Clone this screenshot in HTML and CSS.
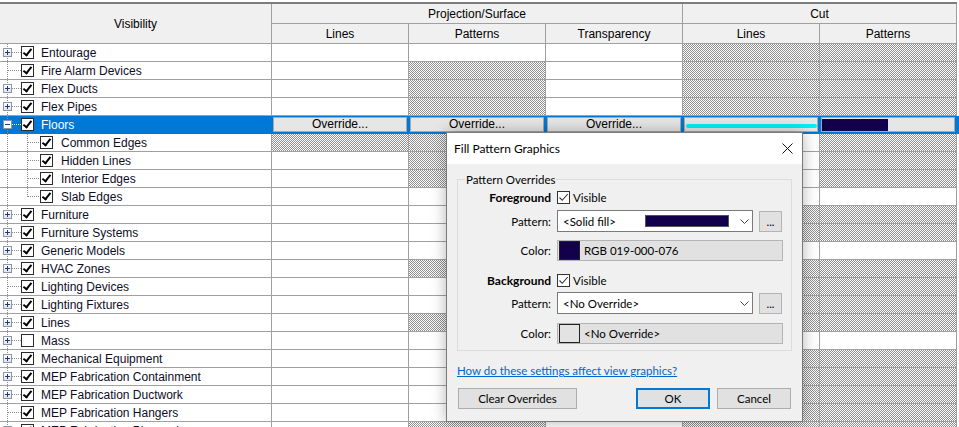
FILE: index.html
```html
<!DOCTYPE html>
<html lang="en">
<head>
    <meta charset="UTF-8">
    <title>Visibility/Graphic Overrides</title>
    <link rel="stylesheet" href="styles.css">
</head>
<body>
    <div class="grid">
        <div class="head">
            <div class="hc vis-h">Visibility</div>
            <div class="hc proj">Projection/Surface</div>
            <div class="hc cut">Cut</div>
            <div class="hc">Lines</div>
            <div class="hc">Patterns</div>
            <div class="hc">Transparency</div>
            <div class="hc">Lines</div>
            <div class="hc">Patterns</div>
        </div>

        <div class="row">
            <div class="vis"><span class="exp"></span><span class="cb on"></span><span class="name">Entourage</span></div>
            <div class="c"></div><div class="c"></div><div class="c"></div><div class="c h"></div><div class="c h"></div>
        </div>
        <div class="row">
            <div class="vis leaf"><span class="noexp"></span><span class="cb on"></span><span class="name">Fire Alarm Devices</span></div>
            <div class="c"></div><div class="c h"></div><div class="c"></div><div class="c h"></div><div class="c h"></div>
        </div>
        <div class="row">
            <div class="vis"><span class="exp"></span><span class="cb on"></span><span class="name">Flex Ducts</span></div>
            <div class="c"></div><div class="c h"></div><div class="c"></div><div class="c h"></div><div class="c h"></div>
        </div>
        <div class="row">
            <div class="vis"><span class="exp"></span><span class="cb on"></span><span class="name">Flex Pipes</span></div>
            <div class="c"></div><div class="c h"></div><div class="c"></div><div class="c h"></div><div class="c h"></div>
        </div>
        <!-- selected row -->
        <div class="row sel">
            <div class="vis"><span class="exp minus"></span><span class="cb on"></span><span class="name">Floors</span></div>
            <div class="c"><span class="ovr">Override...</span></div>
            <div class="c"><span class="ovr">Override...</span></div>
            <div class="c"><span class="ovr">Override...</span></div>
            <div class="c"><span class="ovr"><span class="cyan"></span></span></div>
            <div class="c"><span class="ovr left"><span class="navy"></span></span></div>
        </div>
        <div class="row">
            <div class="vis sub"><span class="cb on"></span><span class="name">Common Edges</span></div>
            <div class="c h"></div><div class="c h"></div><div class="c h"></div><div class="c"></div><div class="c h"></div>
        </div>
        <div class="row">
            <div class="vis sub"><span class="cb on"></span><span class="name">Hidden Lines</span></div>
            <div class="c"></div><div class="c h"></div><div class="c h"></div><div class="c"></div><div class="c h"></div>
        </div>
        <div class="row">
            <div class="vis sub"><span class="cb on"></span><span class="name">Interior Edges</span></div>
            <div class="c"></div><div class="c h"></div><div class="c h"></div><div class="c"></div><div class="c h"></div>
        </div>
        <div class="row">
            <div class="vis sub last"><span class="cb on"></span><span class="name">Slab Edges</span></div>
            <div class="c"></div><div class="c"></div><div class="c"></div><div class="c"></div><div class="c"></div>
        </div>
        <div class="row">
            <div class="vis"><span class="exp"></span><span class="cb on"></span><span class="name">Furniture</span></div>
            <div class="c"></div><div class="c"></div><div class="c"></div><div class="c h"></div><div class="c h"></div>
        </div>
        <div class="row">
            <div class="vis"><span class="exp"></span><span class="cb on"></span><span class="name">Furniture Systems</span></div>
            <div class="c"></div><div class="c"></div><div class="c"></div><div class="c h"></div><div class="c h"></div>
        </div>
        <div class="row">
            <div class="vis"><span class="exp"></span><span class="cb on"></span><span class="name">Generic Models</span></div>
            <div class="c"></div><div class="c"></div><div class="c"></div><div class="c"></div><div class="c"></div>
        </div>
        <div class="row">
            <div class="vis"><span class="exp"></span><span class="cb on"></span><span class="name">HVAC Zones</span></div>
            <div class="c"></div><div class="c h"></div><div class="c"></div><div class="c h"></div><div class="c h"></div>
        </div>
        <div class="row">
            <div class="vis leaf"><span class="noexp"></span><span class="cb on"></span><span class="name">Lighting Devices</span></div>
            <div class="c"></div><div class="c"></div><div class="c"></div><div class="c h"></div><div class="c h"></div>
        </div>
        <div class="row">
            <div class="vis"><span class="exp"></span><span class="cb on"></span><span class="name">Lighting Fixtures</span></div>
            <div class="c"></div><div class="c"></div><div class="c"></div><div class="c h"></div><div class="c h"></div>
        </div>
        <div class="row">
            <div class="vis"><span class="exp"></span><span class="cb on"></span><span class="name">Lines</span></div>
            <div class="c"></div><div class="c h"></div><div class="c h"></div><div class="c h"></div><div class="c h"></div>
        </div>
        <div class="row">
            <div class="vis"><span class="exp"></span><span class="cb"></span><span class="name">Mass</span></div>
            <div class="c"></div><div class="c"></div><div class="c"></div><div class="c"></div><div class="c"></div>
        </div>
        <div class="row">
            <div class="vis"><span class="exp"></span><span class="cb on"></span><span class="name">Mechanical Equipment</span></div>
            <div class="c"></div><div class="c"></div><div class="c"></div><div class="c h"></div><div class="c h"></div>
        </div>
        <div class="row">
            <div class="vis"><span class="exp"></span><span class="cb on"></span><span class="name">MEP Fabrication Containment</span></div>
            <div class="c"></div><div class="c"></div><div class="c"></div><div class="c h"></div><div class="c h"></div>
        </div>
        <div class="row">
            <div class="vis"><span class="exp"></span><span class="cb on"></span><span class="name">MEP Fabrication Ductwork</span></div>
            <div class="c"></div><div class="c"></div><div class="c"></div><div class="c h"></div><div class="c h"></div>
        </div>
        <div class="row">
            <div class="vis leaf"><span class="noexp"></span><span class="cb on"></span><span class="name">MEP Fabrication Hangers</span></div>
            <div class="c"></div><div class="c"></div><div class="c"></div><div class="c h"></div><div class="c h"></div>
        </div>
        <div class="row">
            <div class="vis"><span class="exp"></span><span class="cb on"></span><span class="name">MEP Fabrication Pipework</span></div>
            <div class="c"></div><div class="c h"></div><div class="c"></div><div class="c h"></div><div class="c h"></div>
        </div>
    </div>

    <!-- Fill Pattern Graphics dialog, floats over the grid -->
    <div class="dlg">
        <div class="dlg-title">
            <span>Fill Pattern Graphics</span>
            <svg class="close" width="11" height="11" viewBox="0 0 11 11"><path d="M0.5 0.5 L10.5 10.5 M10.5 0.5 L0.5 10.5" stroke="#111" stroke-width="1" fill="none"/></svg>
        </div>
        <div class="dlg-body">
            <fieldset>
                <legend>Pattern Overrides</legend>

                <div class="frow fr-vis">
                    <span class="lbl bold">Foreground</span>
                    <span class="dcb"><svg width="11" height="11" viewBox="0 0 11 11"><path d="M1.5 5.5 L4.2 8.3 L9.8 2" stroke="#333" stroke-width="1.1" fill="none"/></svg></span>
                    <span class="vis-txt">Visible</span>
                </div>
                <div class="frow fr-pat">
                    <span class="lbl">Pattern:</span>
                    <span class="sel-box">
                        <span>&lt;Solid fill&gt;</span>
                        <span class="pat-sw"></span>
                        <svg class="chev" width="9" height="5" viewBox="0 0 9 5"><path d="M0.5 0.5 L4.5 4.5 L8.5 0.5" stroke="#444" fill="none"/></svg>
                    </span>
                    <span class="dots">...</span>
                </div>
                <div class="frow fr-col">
                    <span class="lbl">Color:</span>
                    <span class="col-box"><span class="col-sw navy-sw"></span>RGB 019-000-076</span>
                </div>

                <div class="frow fr-vis2">
                    <span class="lbl bold">Background</span>
                    <span class="dcb"><svg width="11" height="11" viewBox="0 0 11 11"><path d="M1.5 5.5 L4.2 8.3 L9.8 2" stroke="#333" stroke-width="1.1" fill="none"/></svg></span>
                    <span class="vis-txt">Visible</span>
                </div>
                <div class="frow fr-pat2">
                    <span class="lbl">Pattern:</span>
                    <span class="sel-box">
                        <span>&lt;No Override&gt;</span>
                        <svg class="chev" width="9" height="5" viewBox="0 0 9 5"><path d="M0.5 0.5 L4.5 4.5 L8.5 0.5" stroke="#444" fill="none"/></svg>
                    </span>
                    <span class="dots">...</span>
                </div>
                <div class="frow fr-col2">
                    <span class="lbl">Color:</span>
                    <span class="col-box"><span class="col-sw grey-sw"></span>&lt;No Override&gt;</span>
                </div>
            </fieldset>

            <a class="help" href="#">How do these settings affect view graphics?</a>

            <div class="btns">
                <span class="btn clear">Clear Overrides</span>
                <span class="btn ok">OK</span>
                <span class="btn">Cancel</span>
            </div>
        </div>
    </div>
</body>
</html>
```

FILE: styles.css
```css
/* Visibility / graphics grid + Fill Pattern Graphics dialog */
html, body {
    margin: 0;
    height: 427px;
    overflow: hidden;
    background: #fff;
}
body {
    font-family: "Liberation Sans", Arial, sans-serif;
    font-size: 12px;
    color: #000;
}

.grid {
    width: 957px;
    margin-top: 2px;
    border-top: 2px solid #7c7c7c;
}

/* header */
.head {
    display: grid;
    grid-template-columns: 272px repeat(5, 137px);
    grid-template-rows: 20px 20px;
    background: #f0f0f0;
}
.hc {
    box-sizing: border-box;
    border-right: 1px solid #a0a0a0;
    border-bottom: 1px solid #a0a0a0;
    display: flex;
    align-items: center;
    justify-content: center;
}
.vis-h { grid-row: 1 / 3; }
.proj { grid-column: 2 / 5; }
.cut { grid-column: 5 / 7; }

/* rows */
.row {
    display: flex;
    height: 18px;
}
.row > div {
    box-sizing: border-box;
    height: 18px;
    border-right: 1px solid #a0a0a0;
    border-bottom: 1px solid #a0a0a0;
}
.c { width: 137px; display: flex; }
.h {
    background: repeating-conic-gradient(#8e8e8e 0 25%, #fff 0 50%) 0 0 / 2px 2px;
}

/* tree column */
.vis {
    width: 272px;
    display: flex;
    align-items: center;
    padding-left: 3px;
    color: #0d0d26;
    background:
        repeating-linear-gradient(#8a8a8a 0 1px, transparent 1px 2px) 7px 0 / 1px 100% no-repeat,
        repeating-linear-gradient(90deg, #8a8a8a 0 1px, transparent 1px 2px) 12px 8px / 9px 1px no-repeat;
}
.vis.leaf {
    background:
        repeating-linear-gradient(#8a8a8a 0 1px, transparent 1px 2px) 7px 0 / 1px 100% no-repeat,
        repeating-linear-gradient(90deg, #8a8a8a 0 1px, transparent 1px 2px) 8px 8px / 13px 1px no-repeat;
}
.vis.sub {
    padding-left: 40px;
    background:
        repeating-linear-gradient(#8a8a8a 0 1px, transparent 1px 2px) 7px 0 / 1px 100% no-repeat,
        repeating-linear-gradient(#8a8a8a 0 1px, transparent 1px 2px) 27px 0 / 1px 100% no-repeat,
        repeating-linear-gradient(90deg, #8a8a8a 0 1px, transparent 1px 2px) 28px 8px / 12px 1px no-repeat;
}
.vis.sub.last {
    background:
        repeating-linear-gradient(#8a8a8a 0 1px, transparent 1px 2px) 7px 0 / 1px 100% no-repeat,
        repeating-linear-gradient(#8a8a8a 0 1px, transparent 1px 2px) 27px 0 / 1px 9px no-repeat,
        repeating-linear-gradient(90deg, #8a8a8a 0 1px, transparent 1px 2px) 28px 8px / 12px 1px no-repeat;
}

.exp, .noexp {
    width: 9px;
    height: 9px;
    box-sizing: border-box;
    flex: none;
    margin-right: 9px;
}
.exp {
    position: relative;
    border: 1px solid #8c96a8;
    background: linear-gradient(#fff, #e4e4e4);
}
.exp::before {
    content: "";
    position: absolute;
    left: 1px;
    top: 3px;
    width: 5px;
    height: 1px;
    background: #1e3c7a;
}
.exp::after {
    content: "";
    position: absolute;
    left: 3px;
    top: 1px;
    width: 1px;
    height: 5px;
    background: #1e3c7a;
}
.exp.minus::after { display: none; }

.cb {
    position: relative;
    width: 13px;
    height: 13px;
    box-sizing: border-box;
    flex: none;
    border: 1px solid #2b2b2b;
    background: #fff;
    margin-right: 7px;
}
.cb.on::after {
    content: "";
    position: absolute;
    left: 3px;
    top: 0px;
    width: 3px;
    height: 7px;
    border: solid #000;
    border-width: 0 2px 2px 0;
    transform: rotate(38deg);
}
.sub .cb { margin-right: 8px; }

/* selected row */
.row.sel { background: #0078d7; width: 959px; }
.row.sel > div { border-color: #0078d7; }
.sel .vis {
    color: #fff;
    background:
        repeating-linear-gradient(90deg, #e8f0ff 0 1px, transparent 1px 2px) 12px 8px / 9px 1px no-repeat,
        repeating-linear-gradient(#8a8a8a 0 1px, transparent 1px 2px) 7px 0 / 1px 100% no-repeat;
}
.sel .exp { background: #fff; }
.ovr {
    flex: 1;
    margin: 1px;
    box-sizing: border-box;
    border: 1px solid #a8a8a8;
    background: #e6e6e6;
    display: flex;
    align-items: center;
    justify-content: center;
    line-height: 13px;
}
.ovr.left { justify-content: flex-start; align-items: flex-start; }
.cyan {
    width: 100%;
    height: 4px;
    margin: 2px 0 0 1px;
    border-radius: 2px;
    background: #00f2f2;
}
.navy {
    width: 66px;
    height: 12px;
    margin-top: 1px;
    background: #13004c;
}

/* dialog */
.dlg {
    position: absolute;
    left: 446px;
    top: 132px;
    width: 357px;
    height: 290px;
    box-sizing: border-box;
    border: 1px solid #7a7a7a;
    background: #f0f0f0;
    box-shadow: 0 0 14px rgba(0, 0, 0, 0.3);
    font-family: Lato, "Liberation Sans", sans-serif;
    font-size: 11.5px;
}
.dlg-title {
    height: 31px;
    background: #fff;
    display: flex;
    align-items: center;
    justify-content: space-between;
    padding: 0 9px 0 7px;
    font-size: 12px;
}
.dlg-body {
    padding: 8px 10px 0 10px;
}
fieldset {
    margin: 0;
    padding: 0 0 6px 0;
    border: 1px solid #dcdcdc;
}
legend {
    margin-left: 7px;
    padding: 0 1px;
    line-height: 15px;
}
.frow {
    display: flex;
    align-items: center;
}
.lbl {
    width: 93px;
    margin-right: 6px;
    text-align: right;
}
.bold { font-weight: bold; font-size: 12px; }
.fr-vis { height: 16px; margin-top: 2px; }
.fr-pat { height: 22px; margin-top: 5px; }
.fr-col { height: 21px; margin-top: 8px; }
.fr-vis2 { height: 16px; margin-top: 11px; }
.fr-pat2 { height: 22px; margin-top: 4px; }
.fr-col2 { height: 21px; margin-top: 9px; }

.dcb {
    width: 13px;
    height: 13px;
    box-sizing: border-box;
    border: 1px solid #333;
    background: #fff;
    display: flex;
    margin-right: 3px;
}
.sel-box {
    width: 196px;
    height: 22px;
    box-sizing: border-box;
    border: 1px solid #7a7a7a;
    background: #fff;
    display: flex;
    align-items: center;
    padding-left: 5px;
}
.pat-sw {
    margin-left: auto;
    width: 84px;
    height: 12px;
    box-sizing: border-box;
    border: 1px solid #555;
    background: #13004c;
}
.chev {
    margin: 0 3px 0 11px;
}
.pat-sw + .chev { margin-left: 11px; }
.fr-pat2 .chev { margin-left: auto; }
.dots {
    width: 23px;
    height: 21px;
    box-sizing: border-box;
    margin-left: 6px;
    border: 1px solid #b4b4b4;
    background: #e1e1e1;
    display: flex;
    justify-content: center;
    align-items: center;
}
.col-box {
    width: 226px;
    height: 21px;
    box-sizing: border-box;
    border: 1px solid #b4b4b4;
    background: #e1e1e1;
    display: flex;
    align-items: center;
    padding-left: 1px;
}
.col-sw {
    width: 21px;
    height: 19px;
    box-sizing: border-box;
    border: 1px solid #222;
    margin-right: 4px;
}
.navy-sw { background: #13004c; }
.grey-sw { background: #e3e3e3; }

.help {
    display: block;
    margin-top: 12px;
    line-height: 15px;
    color: #0066cc;
}
.btns {
    display: flex;
    margin-top: 10px;
    padding: 0 1px;
}
.btn {
    width: 74px;
    height: 21px;
    box-sizing: border-box;
    border: 1px solid #adadad;
    background: #e1e1e1;
    display: flex;
    align-items: center;
    justify-content: center;
    margin-left: 7px;
}
.btn.clear { width: 119px; margin-left: 0; }
.btn.ok {
    margin-left: auto;
    border: 2px solid #0078d7;
}
```
